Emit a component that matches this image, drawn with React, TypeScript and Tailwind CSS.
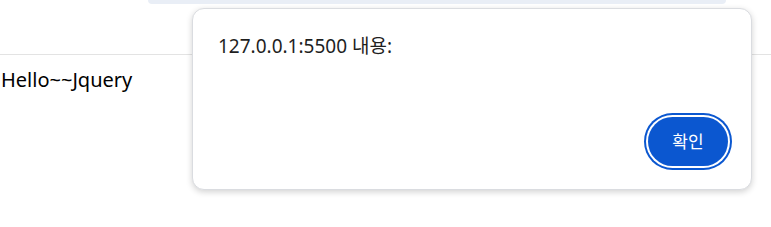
export default function App() {
  return (
    <div
      className="relative w-[771px] h-[227px] overflow-hidden bg-white"
      style={{ fontFamily: '"Noto Sans", "Noto Sans CJK KR", sans-serif' }}
    >
      {/* browser chrome remnant */}
      <div className="ml-[148px] w-[578px] h-[4px] bg-[#e9eef6] rounded-b-[10px]" />
      <div className="h-[51px] border-b border-[#e3e3e3]" />

      {/* page body */}
      <div className="pl-[1px] pt-[12px] text-[20px] leading-[26px] text-black">Hello~~Jquery</div>

      {/* alert dialog */}
      <div className="absolute left-[192px] top-[8px] w-[560px] h-[182px] flex flex-col rounded-[12px] border border-[#dadce0] bg-white shadow-[0_2px_6px_rgba(0,0,0,0.18)]">
        <div className="pl-[25px] pt-[24px] text-[19px] leading-[26px] text-[#1f1f1f]">127.0.0.1:5500 내용:</div>
        <div className="flex-1" />
        <div className="flex justify-end pr-[23px] pb-[23px]">
          <button className="w-[80px] h-[49px] rounded-full bg-[#0b57d0] text-white text-[17px] ring-2 ring-[#0b57d0] ring-offset-2 ring-offset-white">
            확인
          </button>
        </div>
      </div>
    </div>
  );
}
